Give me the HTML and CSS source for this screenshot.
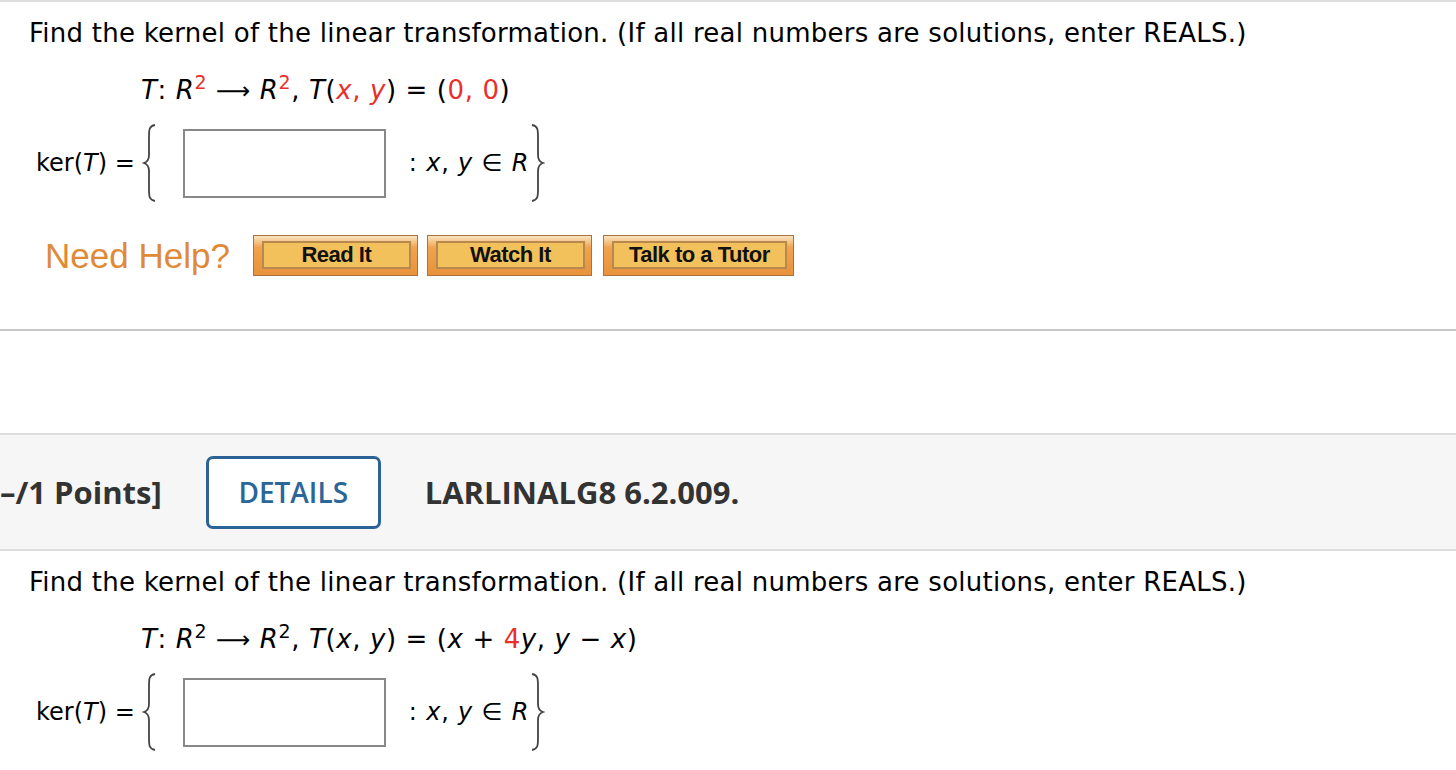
FILE: index.html
```html
<!DOCTYPE html>
<html lang="en">
<head>
    <meta charset="UTF-8">
    <meta name="viewport" content="width=device-width, initial-scale=1.0">
    <title>Kernel of a linear transformation</title>
    <link rel="stylesheet" href="styles.css">
</head>
<body>
    <div class="question first">
        <p class="prompt">Find the kernel of the linear transformation. (If all real numbers are solutions, enter REALS.)</p>
        <p class="formula"><i>T</i>: <i>R</i><sup class="red">2</sup> <span class="arrow">&#10230;</span> <i>R</i><sup class="red">2</sup>, <i>T</i>(<i class="red">x</i><span class="red">,</span> <i class="red">y</i>) = (<span class="red">0, 0</span>)</p>
        <div class="ker-row">
            <span class="ker-label">ker(<i>T</i>) =</span>
            <svg class="brace open" viewBox="0 0 16 80" width="16" height="80"><path d="M13 2 C7 3 7 7 7 14 L7 32 C7 37 5 39 2 40 C5 41 7 43 7 48 L7 66 C7 73 7 77 13 78"/></svg>
            <input class="answer" type="text">
            <span class="cond">: <i>x</i>, <i>y</i> &isin; <i>R</i></span>
            <svg class="brace close" viewBox="0 0 16 80" width="16" height="80"><path d="M3 2 C9 3 9 7 9 14 L9 32 C9 37 11 39 14 40 C11 41 9 43 9 48 L9 66 C9 73 9 77 3 78"/></svg>
        </div>
        <div class="help-row">
            <span class="need-help">Need Help?</span>
            <button class="help-btn"><span>Read It</span></button>
            <button class="help-btn watch"><span>Watch It</span></button>
            <button class="help-btn tutor"><span>Talk to a Tutor</span></button>
        </div>
    </div>

    <div class="spacer"></div>

    <div class="question-header">
        <span class="points">&ndash;/1 Points]</span>
        <button class="details-btn">DETAILS</button>
        <span class="code">LARLINALG8 6.2.009.</span>
    </div>

    <div class="question">
        <p class="prompt">Find the kernel of the linear transformation. (If all real numbers are solutions, enter REALS.)</p>
        <p class="formula"><i>T</i>: <i>R</i><sup>2</sup> <span class="arrow">&#10230;</span> <i>R</i><sup>2</sup>, <i>T</i>(<i>x</i>, <i>y</i>) = (<i>x</i> + <span class="red">4</span><i>y</i>, <i>y</i> &minus; <i>x</i>)</p>
        <div class="ker-row">
            <span class="ker-label">ker(<i>T</i>) =</span>
            <svg class="brace open" viewBox="0 0 16 80" width="16" height="80"><path d="M13 2 C7 3 7 7 7 14 L7 32 C7 37 5 39 2 40 C5 41 7 43 7 48 L7 66 C7 73 7 77 13 78"/></svg>
            <input class="answer" type="text">
            <span class="cond">: <i>x</i>, <i>y</i> &isin; <i>R</i></span>
            <svg class="brace close" viewBox="0 0 16 80" width="16" height="80"><path d="M3 2 C9 3 9 7 9 14 L9 32 C9 37 11 39 14 40 C11 41 9 43 9 48 L9 66 C9 73 9 77 3 78"/></svg>
        </div>
    </div>
</body>
</html>
```

FILE: styles.css
```css
*{
    margin: 0;
    padding: 0;
    box-sizing: border-box;
}

body{
    background-color: #fff;
    font-family: "DejaVu Sans", Verdana, sans-serif;
    color: #000;
}

.question{
    padding-left: 29px;
}

.question.first{
    border-top: 2px solid #ddd;
    border-bottom: 2px solid #c8c8c8;
    padding-bottom: 53px;
}

.prompt{
    margin-top: 16px;
    font-size: 26px;
    letter-spacing: 0.25px;
    line-height: 30px;
}

.formula{
    margin-top: 27px;
    padding-left: 112px;
    font-size: 26px;
    letter-spacing: 0.6px;
    line-height: 30px;
}

.formula sup{
    font-size: 19px;
    vertical-align: 10px;
    line-height: 0;
}

.arrow{
    font-size: 24px;
}

.red{
    color: #e8302a;
}

.ker-row{
    margin-top: 17px;
    padding-left: 7px;
    display: flex;
    align-items: center;
    height: 80px;
    font-size: 24px;
}

.brace{
    fill: none;
    stroke: #444;
    stroke-width: 1.8;
}

.brace.open{
    margin-left: 7px;
}

.answer{
    margin-left: 25px;
    width: 203px;
    height: 69px;
    border: 2px solid #888;
    background-color: #fff;
    outline: none;
}

.cond{
    margin-left: 23px;
    letter-spacing: 0.8px;
}

.help-row{
    margin-top: 32px;
    padding-left: 16px;
    display: flex;
    align-items: center;
}

.need-help{
    font-family: "Liberation Sans", Arial, sans-serif;
    font-size: 35px;
    color: #e08a38;
    margin-right: 23px;
}

.help-btn{
    width: 165px;
    height: 41px;
    margin-right: 9px;
    padding: 5px 6px 6px 8px;
    border: 1px solid #a8733c;
    background: linear-gradient(#fbe4c2 0%, #f0a24e 30%, #e9923c 100%);
    cursor: pointer;
}

.help-btn span{
    display: flex;
    justify-content: center;
    align-items: center;
    height: 100%;
    border: 2px solid #b8894e;
    background-color: #f3c15c;
    font-family: "Liberation Sans", Arial, sans-serif;
    font-weight: bold;
    font-size: 22px;
    letter-spacing: -0.5px;
    color: #111;
}

.help-btn.watch{
    margin-right: 11px;
}

.help-btn.tutor{
    width: 191px;
}

.spacer{
    height: 102px;
}

.question-header{
    height: 118px;
    border-top: 2px solid #ddd;
    border-bottom: 2px solid #ddd;
    background-color: #f6f6f6;
    display: flex;
    align-items: center;
    gap: 44px;
    font-family: "Open Sans", sans-serif;
}

.points, .code{
    font-size: 31px;
    font-weight: bold;
    color: #333;
}

.details-btn{
    width: 175px;
    height: 73px;
    border: 3px solid #2b6396;
    border-radius: 7px;
    background-color: #fff;
    color: #2b6699;
    font-family: "Open Sans", sans-serif;
    font-weight: 600;
    font-size: 28px;
    cursor: pointer;
}
```
